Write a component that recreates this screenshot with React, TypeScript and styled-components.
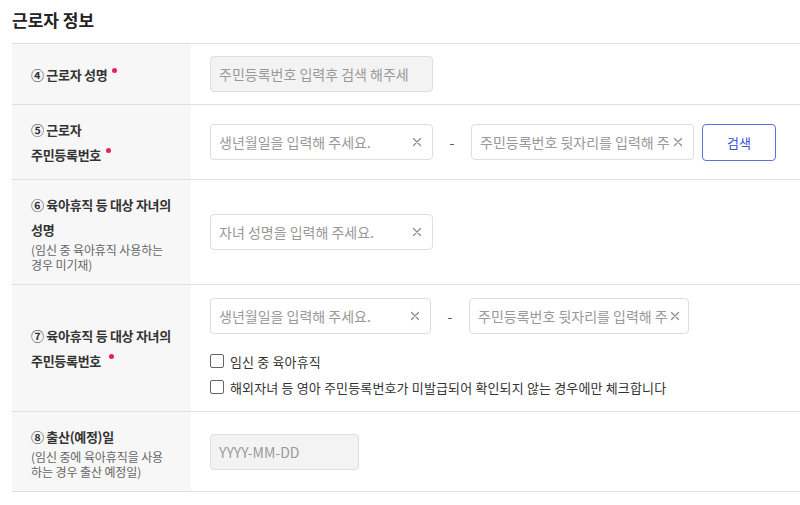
import React from "react";
import styled, { createGlobalStyle } from "styled-components";

const Global = createGlobalStyle`
  html, body { margin: 0; padding: 0; background: #fff; }
  body { font-family: "Noto Sans CJK KR", "Noto Sans", sans-serif; color: #333; }
  * { box-sizing: border-box; }
`;

const Page = styled.div`
  width: 800px;
  overflow: hidden;
`;

const Title = styled.h2`
  margin: 0;
  padding: 8px 12px 11px;
  font-size: 17px;
  line-height: 24px;
  font-weight: 700;
  color: #222;
`;

const Table = styled.div`
  margin-left: 12px;
  border-top: 1px solid #e0e0e0;
`;

const Row = styled.div`
  display: grid;
  grid-template-columns: 179px 1fr;
  border-bottom: 1px solid #e0e0e0;
`;

const LabelCell = styled.div`
  background: #f7f7f7;
  padding: 12px 8px 12px 19px;
  display: flex;
  flex-direction: column;
  justify-content: center;
`;

const LabelText = styled.div`
  font-size: 13px;
  line-height: 25px;
  font-weight: 700;
  color: #333;
  letter-spacing: -0.3px;
  white-space: nowrap;
`;

const Required = styled.span`
  display: inline-block;
  width: 5px;
  height: 5px;
  border-radius: 50%;
  background: #ec1d5c;
  margin-left: 5px;
  vertical-align: 7px;
`;

const SubText = styled.div`
  font-size: 12px;
  line-height: 15px;
  color: #666;
  letter-spacing: -0.1px;
  white-space: nowrap;
`;

const ValueCell = styled.div<{ $pad?: string }>`
  padding: ${(p) => p.$pad || "12px 0 12px 19px"};
  display: flex;
  flex-direction: column;
  justify-content: center;
`;

const InputLine = styled.div`
  display: flex;
  align-items: center;
`;

const Field = styled.div<{ $w: number; $disabled?: boolean }>`
  width: ${(p) => p.$w}px;
  height: 36px;
  border: 1px solid #dedede;
  border-radius: 4px;
  background: ${(p) => (p.$disabled ? "#f3f3f3" : "#fff")};
  display: flex;
  align-items: center;
  padding: 0 8px 0 8px;
  font-size: 14px;
  color: #999;
`;

const Placeholder = styled.span`
  flex: 1;
  white-space: nowrap;
`;

const Clear = styled.span`
  width: 14px;
  display: flex;
  justify-content: center;
  align-items: center;
  margin-left: 2px;
`;

const Dash = styled.span`
  width: 38px;
  text-align: center;
  font-size: 14px;
  color: #555;
`;

const SearchButton = styled.button`
  margin-left: 8px;
  width: 74px;
  height: 37px;
  border: 1px solid #5a6fe6;
  border-radius: 4px;
  background: #fff;
  color: #3b52d6;
  font-family: inherit;
  font-size: 13px;
  cursor: pointer;
`;

const Checks = styled.div`
  margin-top: 16px;
  display: flex;
  flex-direction: column;
  gap: 4px;
`;

const CheckRow = styled.label`
  display: flex;
  align-items: center;
  height: 22px;
  font-size: 13px;
  color: #333;
  letter-spacing: 0.15px;
  white-space: nowrap;
`;

const Box = styled.span`
  width: 14px;
  height: 14px;
  border: 1px solid #666;
  border-radius: 2px;
  margin-right: 6px;
  background: #fff;
`;

const X = () => (
  <svg width="10" height="10" viewBox="0 0 10 10">
    <path d="M1.5 1.5 L8.5 8.5 M8.5 1.5 L1.5 8.5" stroke="#8a8a8a" strokeWidth="1.2" strokeLinecap="round" />
  </svg>
);

const Input = ({ w, text, clear = true, disabled }: { w: number; text: string; clear?: boolean; disabled?: boolean }) => (
  <Field $w={w} $disabled={disabled}>
    <Placeholder>{text}</Placeholder>
    {clear && (
      <Clear>
        <X />
      </Clear>
    )}
  </Field>
);

export default function App() {
  return (
    <Page>
      <Global />
      <Title>근로자 정보</Title>
      <Table>
        <Row>
          <LabelCell>
            <LabelText>
              ④ 근로자 성명<Required />
            </LabelText>
          </LabelCell>
          <ValueCell>
            <Input w={223} text="주민등록번호 입력후 검색 해주세" clear={false} disabled />
          </ValueCell>
        </Row>
        <Row>
          <LabelCell>
            <LabelText>⑤ 근로자</LabelText>
            <LabelText>
              주민등록번호<Required />
            </LabelText>
          </LabelCell>
          <ValueCell>
            <InputLine>
              <Input w={223} text="생년월일을 입력해 주세요." />
              <Dash>-</Dash>
              <Input w={223} text="주민등록번호 뒷자리를 입력해 주" />
              <SearchButton>검색</SearchButton>
            </InputLine>
          </ValueCell>
        </Row>
        <Row>
          <LabelCell>
            <LabelText>⑥ 육아휴직 등 대상 자녀의</LabelText>
            <LabelText>성명</LabelText>
            <SubText>(임신 중 육아휴직 사용하는</SubText>
            <SubText>경우 미기재)</SubText>
          </LabelCell>
          <ValueCell>
            <Input w={223} text="자녀 성명을 입력해 주세요." />
          </ValueCell>
        </Row>
        <Row>
          <LabelCell>
            <LabelText>⑦ 육아휴직 등 대상 자녀의</LabelText>
            <LabelText>
              주민등록번호 <Required />
            </LabelText>
          </LabelCell>
          <ValueCell $pad="13px 0 13px 19px">
            <InputLine>
              <Input w={221} text="생년월일을 입력해 주세요." />
              <Dash>-</Dash>
              <Input w={220} text="주민등록번호 뒷자리를 입력해 주" />
            </InputLine>
            <Checks>
              <CheckRow>
                <Box />
                임신 중 육아휴직
              </CheckRow>
              <CheckRow>
                <Box />
                해외자녀 등 영아 주민등록번호가 미발급되어 확인되지 않는 경우에만 체크합니다
              </CheckRow>
            </Checks>
          </ValueCell>
        </Row>
        <Row>
          <LabelCell>
            <LabelText>⑧ 출산(예정)일</LabelText>
            <SubText>(임신 중에 육아휴직을 사용</SubText>
            <SubText>하는 경우 출산 예정일)</SubText>
          </LabelCell>
          <ValueCell>
            <Input w={149} text="YYYY-MM-DD" clear={false} disabled />
          </ValueCell>
        </Row>
      </Table>
    </Page>
  );
}
